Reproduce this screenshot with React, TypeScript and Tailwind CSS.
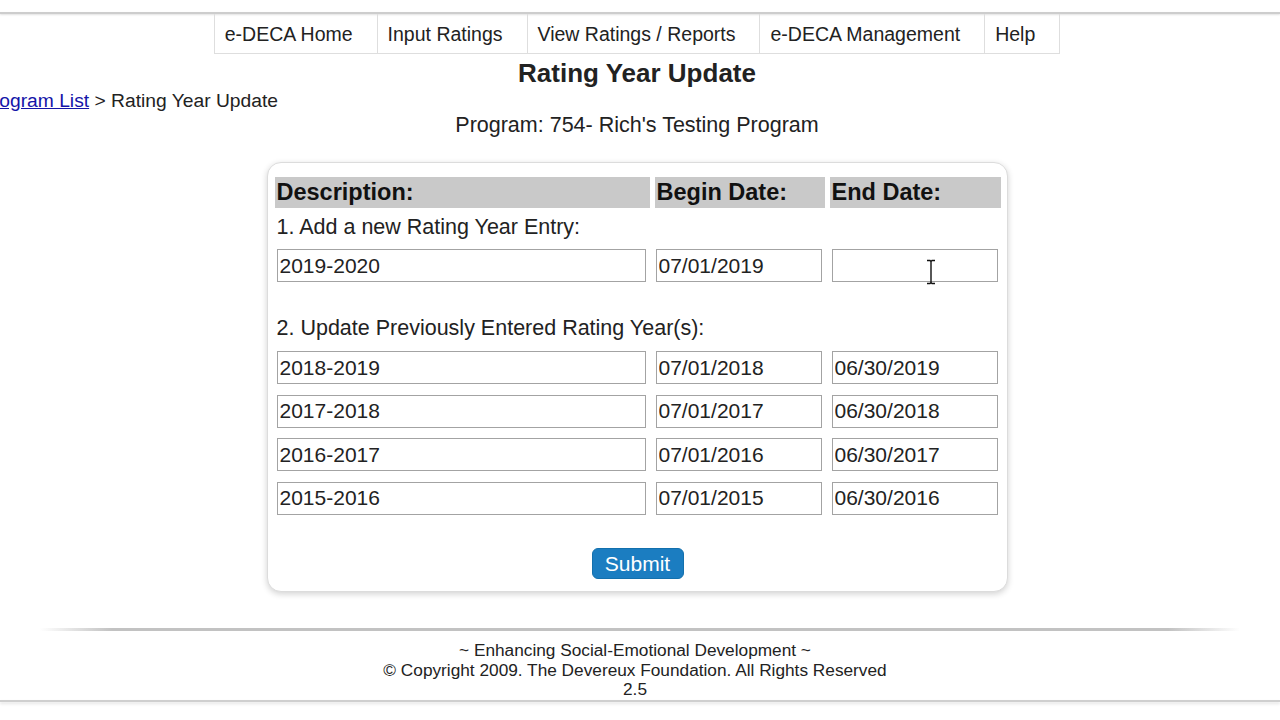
const navItems = [
  "e-DECA Home",
  "Input Ratings",
  "View Ratings / Reports",
  "e-DECA Management",
  "Help",
];

const prevYears = [
  { desc: "2018-2019", begin: "07/01/2018", end: "06/30/2019" },
  { desc: "2017-2018", begin: "07/01/2017", end: "06/30/2018" },
  { desc: "2016-2017", begin: "07/01/2016", end: "06/30/2017" },
  { desc: "2015-2016", begin: "07/01/2015", end: "06/30/2016" },
];

const inputCls =
  "h-[33px] border border-[#a3a3a3] bg-white pl-[2px] text-[21px] text-[#222] outline-none font-['Liberation_Sans',Arial,sans-serif]";

const Row = ({ desc, begin, end }: { desc: string; begin: string; end: string }) => (
  <div className="grid grid-cols-[375px_170px_171px] gap-x-[5px]">
    <input className={`${inputCls} ml-[2px] w-[369px]`} defaultValue={desc} />
    <input className={`${inputCls} ml-[1px] w-[166px]`} defaultValue={begin} />
    <input className={`${inputCls} ml-[2px] w-[166px]`} defaultValue={end} />
  </div>
);

export default function App() {
  return (
    <div className="min-h-[720px] overflow-hidden bg-white font-['Liberation_Sans',Arial,sans-serif] text-[#222]">
      {/* top rule */}
      <div className="h-[12px]" />
      <div className="h-[2px] bg-[#cdcdcd] shadow-[0_1px_2px_rgba(0,0,0,0.12)]" />

      <div className="w-[1274px]">
        {/* nav */}
        <div className="flex justify-center">
          {navItems.map((item, i) => (
            <div
              key={item}
              className={`flex h-[40px] items-center border-b border-r border-[#dedede] pl-[10px] pr-[24px] pt-[2px] text-[19.5px] ${
                i === 0 ? "border-l" : ""
              }`}
            >
              {item}
            </div>
          ))}
        </div>

        <h1 className="mt-[4px] text-center text-[26px] font-bold leading-[30px]">Rating Year Update</h1>

        <div className="-ml-[20px] mt-[2px] text-[19.25px] leading-[22px]">
          <a href="#" className="text-[#1414a8] underline">
            Program List
          </a>{" "}
          &gt; Rating Year Update
        </div>

        <div className="mt-[1px] text-center text-[21.5px] leading-[24px]">
          Program: 754- Rich's Testing Program
        </div>

        {/* card */}
        <div className="relative mx-auto mt-[25px] w-[741px] rounded-[14px] border border-[#dcdcdc] bg-white pb-[12px] pl-[7px] pr-[6px] pt-[14px] shadow-[0_2px_6px_rgba(0,0,0,0.18)]">
          <div className="grid grid-cols-[375px_170px_171px] gap-x-[5px]">
            {["Description:", "Begin Date:", "End Date:"].map((h) => (
              <div key={h} className="flex h-[31px] items-center bg-[#c9c9c9] pl-[2px] text-[23.5px] font-bold text-[#111]">
                {h}
              </div>
            ))}
          </div>

          <div className="flex h-[38px] items-center pl-[2px] text-[21.5px]">1. Add a new Rating Year Entry:</div>
          <div className="mt-[3px]">
            <Row desc="2019-2020" begin="07/01/2019" end="" />
          </div>

          <div className="mt-[27px] flex h-[38px] items-center pl-[2px] text-[21.5px]">
            2. Update Previously Entered Rating Year(s):
          </div>
          <div className="mt-[4px]">
            {prevYears.map((r) => (
              <div key={r.desc} className="h-[43.5px]">
                <Row {...r} />
              </div>
            ))}
          </div>

          <div className="mt-[23px] flex justify-center">
            <button className="h-[31px] w-[92px] rounded-[6px] border border-[#1370ad] bg-[#1b7dc1] text-[21px] leading-none text-white">
              Submit
            </button>
          </div>

          {/* text cursor over the end date field */}
          <svg
            className="absolute left-[658px] top-[96px]"
            width="10"
            height="26"
            viewBox="0 0 10 26"
          >
            <path d="M1 1.5h3l1 1 1-1h3M5 2.5v21M1 24.5h3l1-1 1 1h3" fill="none" stroke="#111" strokeWidth="1.4" />
          </svg>
        </div>
      </div>

      {/* footer */}
      <div className="mx-[40px] mt-[36px] h-[3px] bg-[linear-gradient(to_right,transparent,#c2c2c2_6%,#c2c2c2_94%,transparent)]" />
      <div className="w-[1270px] pt-[10px] text-center text-[17.25px] leading-[19.5px] text-[#222]">
        <div>~ Enhancing Social-Emotional Development ~</div>
        <div>© Copyright 2009. The Devereux Foundation. All Rights Reserved</div>
        <div>2.5</div>
      </div>
      <div className="h-[2px] bg-[#cfcfcf] shadow-[0_2px_3px_rgba(0,0,0,0.12)]" />
    </div>
  );
}
